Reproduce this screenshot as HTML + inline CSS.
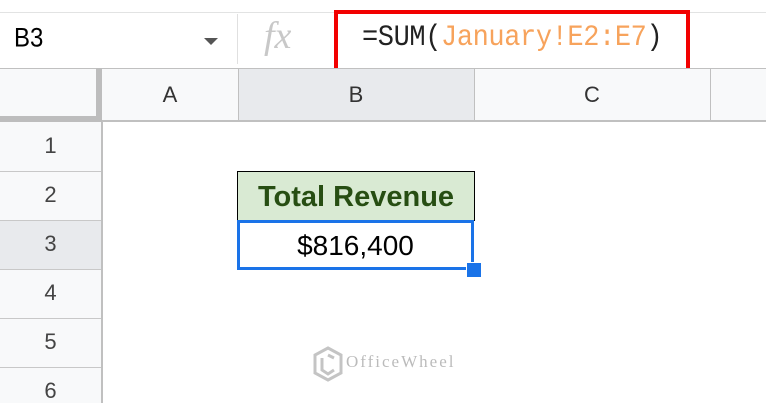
<!DOCTYPE html><html><head><style>
body{margin:0;width:766px;height:403px;overflow:hidden;background:#fff;font-family:"Liberation Sans",sans-serif;position:relative}
.a{position:absolute}
</style></head><body>
<div class="a" style="left:0;top:0;width:766px;height:12px;background:#fff;border-bottom:1px solid #e2e3e3"></div>
<div class="a" style="left:14px;top:25px;font-size:24px;color:#000;transform:scaleY(1.1)">B3</div>
<div class="a" style="left:204px;top:38px;width:0;height:0;border-left:7px solid transparent;border-right:7px solid transparent;border-top:7px solid #555"></div>
<div class="a" style="left:237px;top:14px;width:1px;height:50px;background:#e0e0e0"></div>
<div class="a" style="left:264px;top:14px;font-family:'Liberation Serif',serif;font-style:italic;font-size:38px;color:#c8c8c8">fx</div>
<div class="a" style="left:334px;top:10px;width:348px;height:54px;border:4px solid #f20000"></div>
<div class="a" style="left:362px;top:22px;font-family:'Liberation Mono',monospace;font-size:27px;letter-spacing:-0.4px;color:#222;transform:scaleY(1.1);transform-origin:left top"><span>=SUM(</span><span style="color:#f7a35c">January!E2:E7</span><span>)</span></div>
<div class="a" style="left:0;top:68px;width:766px;height:1px;background:#c0c0c0"></div>
<div class="a" style="left:0;top:69px;width:766px;height:53px;background:#f8f9fa"></div>
<div class="a" style="left:238px;top:69px;width:236px;height:53px;background:#e8eaed"></div>
<div class="a" style="left:0;top:120px;width:766px;height:2px;background:#c0c0c0"></div>
<div class="a" style="left:96px;top:68px;width:6px;height:54px;background:#bdbdbd"></div>
<div class="a" style="left:0;top:116px;width:102px;height:6px;background:#bdbdbd"></div>
<div class="a" style="left:238px;top:68px;width:1px;height:54px;background:#c0c0c0"></div>
<div class="a" style="left:474px;top:68px;width:1px;height:54px;background:#c0c0c0"></div>
<div class="a" style="left:710px;top:68px;width:1px;height:54px;background:#c0c0c0"></div>
<div class="a" style="left:102px;top:82px;width:136px;text-align:center;font-size:22px;color:#333">A</div>
<div class="a" style="left:238px;top:82px;width:236px;text-align:center;font-size:22px;color:#333">B</div>
<div class="a" style="left:474px;top:82px;width:236px;text-align:center;font-size:22px;color:#333">C</div>
<div class="a" style="left:0;top:122px;width:101px;height:281px;background:#f8f9fa;border-right:2px solid #c0c0c0"></div>
<div class="a" style="left:0;top:220px;width:101px;height:49px;background:#e8eaed"></div>
<div class="a" style="left:0;top:171px;width:101px;height:1px;background:#c8c8c8"></div>
<div class="a" style="left:0;top:220px;width:101px;height:1px;background:#c8c8c8"></div>
<div class="a" style="left:0;top:269px;width:101px;height:1px;background:#c8c8c8"></div>
<div class="a" style="left:0;top:318px;width:101px;height:1px;background:#c8c8c8"></div>
<div class="a" style="left:0;top:367px;width:101px;height:1px;background:#c8c8c8"></div>
<div class="a" style="left:0;top:134px;width:101px;text-align:center;font-size:22px;color:#444;line-height:24px">1</div>
<div class="a" style="left:0;top:183px;width:101px;text-align:center;font-size:22px;color:#444;line-height:24px">2</div>
<div class="a" style="left:0;top:232px;width:101px;text-align:center;font-size:22px;color:#444;line-height:24px">3</div>
<div class="a" style="left:0;top:281px;width:101px;text-align:center;font-size:22px;color:#444;line-height:24px">4</div>
<div class="a" style="left:0;top:330px;width:101px;text-align:center;font-size:22px;color:#444;line-height:24px">5</div>
<div class="a" style="left:0;top:379px;width:101px;text-align:center;font-size:22px;color:#444;line-height:24px">6</div>
<div class="a" style="left:237px;top:171px;width:236px;height:48px;background:#d9ead3;border:1px solid #000;text-align:center;font-weight:bold;font-size:29px;line-height:50px;color:#274e13">Total Revenue</div>
<div class="a" style="left:237px;top:220px;width:231px;height:44px;border:3px solid #1a73e8;text-align:center;font-size:28px;line-height:46px;color:#000">$816,400</div>
<div class="a" style="left:466px;top:262px;width:14px;height:14px;background:#1a73e8;border:1px solid #fff"></div>
<svg class="a" style="left:312px;top:346px" width="32" height="36" viewBox="0 0 32 36"><path d="M16 2 L29 9 V27 L16 34 L3 27 V9 Z M10 12 V24 L16 28 L22 24 M22 12 L16 9" fill="none" stroke="#c4c4c4" stroke-width="3"/></svg>
<div class="a" style="left:346px;top:352px;font-family:'Liberation Serif',serif;font-size:17px;letter-spacing:2px;color:#bbb">OfficeWheel</div>
</body></html>
